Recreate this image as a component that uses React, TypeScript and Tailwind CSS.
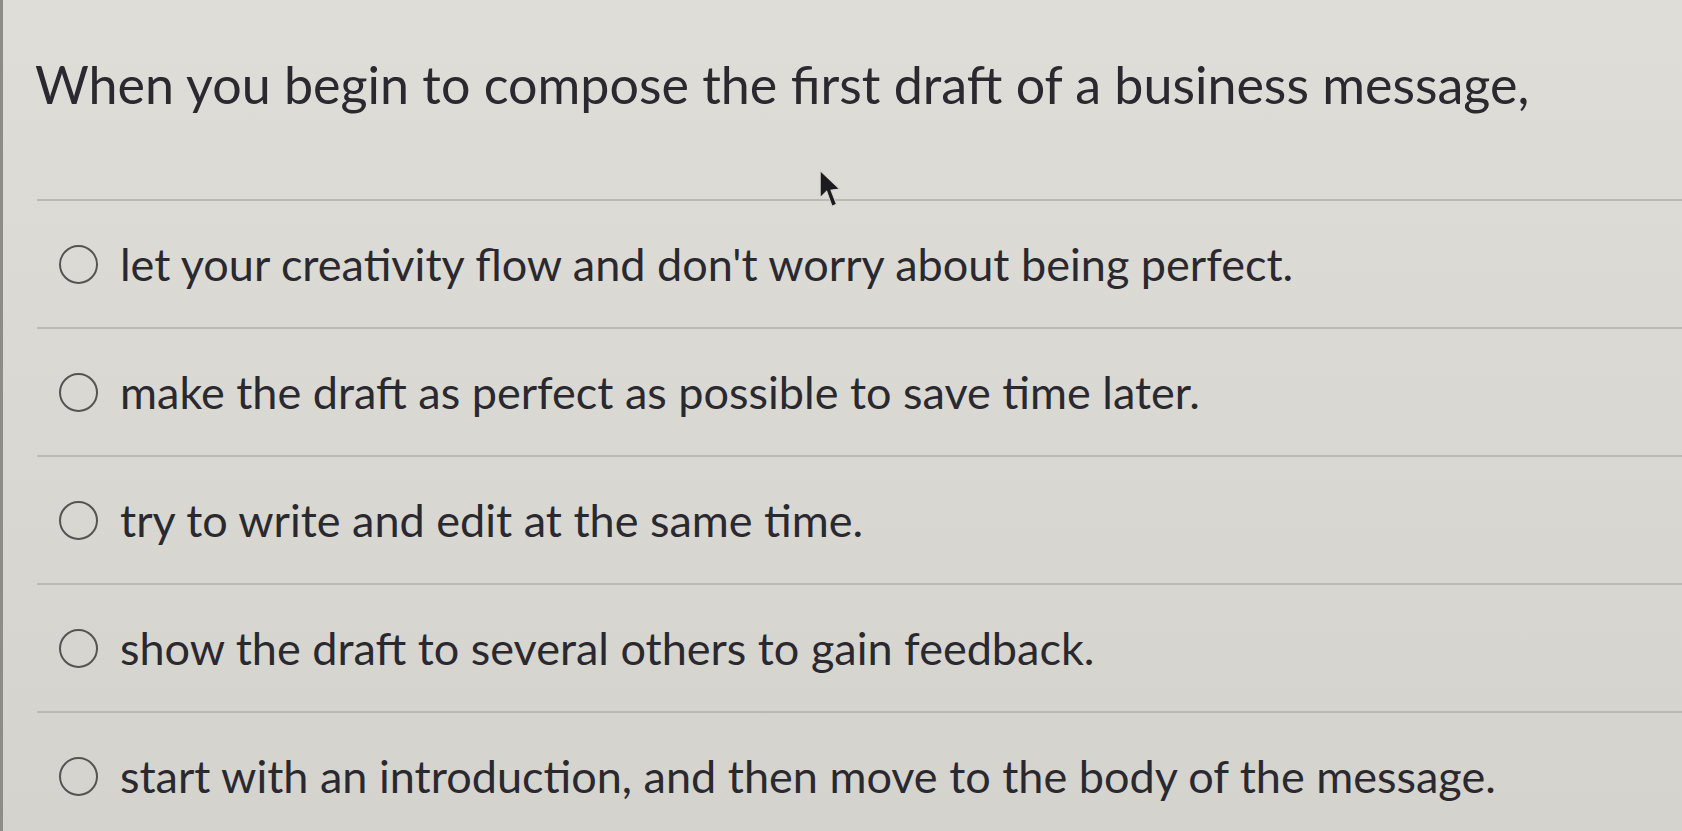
const OPTIONS = [
  "let your creativity flow and don't worry about being perfect.",
  "make the draft as perfect as possible to save time later.",
  "try to write and edit at the same time.",
  "show the draft to several others to gain feedback.",
  "start with an introduction, and then move to the body of the message.",
];

function Cursor() {
  return (
    <svg
      className="absolute left-[818px] top-[168px]"
      width="26"
      height="42"
      viewBox="0 0 24 38"
    >
      <path
        d="M2 2 L2 27 L8 21 L13 35 L17 33 L12 20 L20 19 Z"
        fill="#1c1b20"
        stroke="#d9d7d2"
        strokeWidth="1"
      />
    </svg>
  );
}

export default function App() {
  return (
    <div className="relative h-[831px] w-[1682px] overflow-hidden bg-gradient-to-b from-[#dfddd8] to-[#d5d3cd] font-['Lato','Open_Sans',sans-serif] text-[#2a2930]">
      <div className="absolute inset-y-0 left-0 w-[3px] bg-[#8d8c88]" />
      <div className="pl-[37px]">
        <h1 className="-ml-[2px] pt-[53px] text-[52px] leading-[62px] font-normal">
          When you begin to compose the first draft of a business message,
        </h1>
        <ul className="mt-[84px]">
          {OPTIONS.map((opt) => (
            <li
              key={opt}
              className="flex h-[128px] items-center gap-[22px] border-t-2 border-[#bab9b4] pl-[22px]"
            >
              <span className="h-[39px] w-[39px] shrink-0 rounded-full border-[2.5px] border-[#555452]" />
              <span className="text-[45px] leading-none">{opt}</span>
            </li>
          ))}
        </ul>
      </div>
      <Cursor />
    </div>
  );
}
